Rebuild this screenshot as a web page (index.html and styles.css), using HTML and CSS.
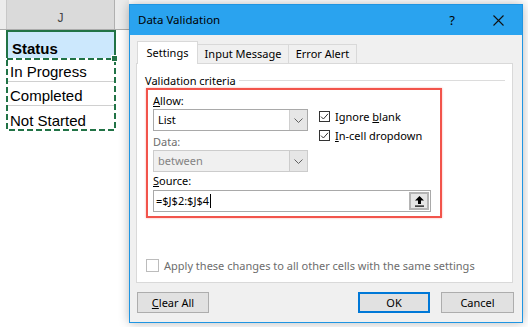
FILE: index.html
```html
<!DOCTYPE html>
<html>
<head>
<meta charset="utf-8">
<link rel="stylesheet" href="styles.css">
</head>
<body>
<div class="screen">
  <div class="sheet">
    <div class="hdr">
      <div class="hdr-gap"></div>
      <div class="hdr-j">J</div>
      <div class="hdr-rest"></div>
    </div>
    <div class="cells">
      <div class="cell head">Status</div>
      <div class="range">
        <div class="cell row">In Progress</div>
        <div class="cell row">Completed</div>
        <div class="cell row last">Not Started</div>
        <svg class="ants" width="110" height="73" viewBox="0 0 110 73"><rect x="1" y="1" width="108" height="71" fill="none" stroke="#217346" stroke-width="2" stroke-dasharray="6 3"/></svg>
        <div class="handle"></div>
      </div>
    </div>
  </div>

  <div class="dialog">
    <div class="titlebar">
      <span class="title">Data Validation</span>
      <span class="help">?</span>
      <span class="close"><svg width="11" height="11" viewBox="0 0 11 11"><path d="M0.5 0.5 L10.5 10.5 M10.5 0.5 L0.5 10.5" stroke="#111" stroke-width="1.1" fill="none"/></svg></span>
    </div>
    <div class="dbody">
      <div class="tabs">
        <div class="tab active">Settings</div>
        <div class="tab t2">Input Message</div>
        <div class="tab t3">Error Alert</div>
      </div>
      <div class="panel">
        <div class="group">
          <span class="glabel">Validation criteria</span>
          <span class="gline"></span>
        </div>
        <div class="criteria">
          <div class="top">
            <div class="lcol">
              <div class="lbl"><u>A</u>llow:</div>
              <div class="select">
                <span class="val">List</span>
                <span class="dd"><svg width="9" height="5" viewBox="0 0 9 5"><polyline points="0.5,0.5 4.5,4.5 8.5,0.5" fill="none" stroke="#606060"/></svg></span>
              </div>
              <div class="lbl dis">Data:</div>
              <div class="select disabled">
                <span class="val">between</span>
                <span class="dd"><svg width="9" height="5" viewBox="0 0 9 5"><polyline points="0.5,0.5 4.5,4.5 8.5,0.5" fill="none" stroke="#606060"/></svg></span>
              </div>
            </div>
            <div class="rcol">
              <div class="chk"><svg width="11" height="11" viewBox="0 0 11 11"><rect x="0.5" y="0.5" width="10" height="10" fill="#fff" stroke="#333"/><polyline points="2,5.6 4.4,8 9,2.8" fill="none" stroke="#333"/></svg><span>Ignore <u>b</u>lank</span></div>
              <div class="chk"><svg width="11" height="11" viewBox="0 0 11 11"><rect x="0.5" y="0.5" width="10" height="10" fill="#fff" stroke="#333"/><polyline points="2,5.6 4.4,8 9,2.8" fill="none" stroke="#333"/></svg><span><u>I</u>n-cell dropdown</span></div>
            </div>
          </div>
          <div class="lbl src"><u>S</u>ource:</div>
          <div class="input">
            <span class="val">=$J$2:$J$4<span class="caret"></span></span>
            <span class="upbtn"><svg width="11" height="12" viewBox="0 0 11 12"><path d="M5.5 1 L10 5.5 H7 V9 H4 V5.5 H1 Z" fill="#000"/><rect x="1" y="10.5" width="9" height="1.2" fill="#000"/></svg></span>
          </div>
        </div>
        <div class="apply">
          <span class="box"></span>
          <span>Apply these changes to all other cells with the same settings</span>
        </div>
      </div>
      <div class="buttons">
        <div class="btn"><u>C</u>lear All</div>
        <div class="spacer"></div>
        <div class="btn ok">OK</div>
        <div class="btn">Cancel</div>
      </div>
    </div>
  </div>
</div>
</body>
</html>
```

FILE: styles.css
```css
html, body {
  margin: 0;
  padding: 0;
  background: #ffffff;
}
.screen {
  position: relative;
  width: 528px;
  height: 327px;
  overflow: hidden;
  background: #ffffff;
}

/* ---------- spreadsheet ---------- */
.sheet {
  width: 129px;
  font-family: "Liberation Sans", Arial, sans-serif;
}
.hdr {
  display: flex;
  height: 29px;
  border-bottom: 1px solid #ababab;
  background: #e6e6e6;
}
.hdr-gap {
  width: 6px;
  background: #ececec;
}
.hdr-j {
  width: 109px;
  border-left: 1px solid #c8c8c8;
  border-right: 1px solid #b0b0b0;
  background: #dadada;
  display: flex;
  align-items: center;
  justify-content: center;
  font-size: 12px;
  color: #444;
  padding-top: 6px;
  box-sizing: border-box;
}
.hdr-rest {
  flex: 1;
  background: #ebebeb;
}
.cells {
  margin-left: 6px;
  width: 110px;
}
.cell {
  box-sizing: border-box;
  font-size: 15px;
  color: #000;
  display: flex;
  align-items: flex-end;
  padding-left: 4px;
}
.cell.head {
  height: 28px;
  background: #cce8fd;
  border: 2px solid #217346;
  border-bottom: none;
  font-weight: bold;
  padding-left: 4px;
  padding-bottom: 1px;
}
.range {
  position: relative;
  height: 73px;
  padding: 0 2px;
  box-sizing: border-box;
}
.cell.row {
  height: 24px;
  border-bottom: 1px solid #d0d0d0;
  padding-bottom: 1px;
  padding-left: 2px;
}
.cell.row.last {
  border-bottom: none;
}
.ants {
  position: absolute;
  left: 0;
  top: 0;
}
.handle {
  position: absolute;
  right: -2px;
  top: -3px;
  width: 5px;
  height: 5px;
  background: #217346;
  border: 1px solid #fff;
}

/* ---------- dialog ---------- */
.dialog {
  position: absolute;
  left: 129px;
  top: 4px;
  width: 394px;
  height: 319px;
  box-sizing: border-box;
  border: 1px solid #1f95e2;
  background: #f0f0f0;
  box-shadow: 0 0 10px rgba(0, 0, 0, 0.28);
  display: flex;
  flex-direction: column;
  font-family: "Noto Sans", "Open Sans", sans-serif;
  font-size: 11px;
  color: #000;
}
.titlebar {
  height: 30px;
  background: #2aa3ef;
  display: flex;
  align-items: center;
  padding-left: 8px;
  box-sizing: border-box;
}
.title {
  flex: 1;
  font-size: 11.5px;
  padding-bottom: 1px;
}
.help {
  width: 10px;
  font-size: 13px;
  margin-right: 36px;
  text-align: center;
}
.close {
  width: 11px;
  height: 11px;
  display: flex;
  margin-right: 18px;
}
.dbody {
  flex: 1;
  display: flex;
  flex-direction: column;
}
.tabs {
  height: 28px;
  display: flex;
  align-items: flex-end;
  padding-left: 7px;
  box-sizing: border-box;
}
.tab {
  box-sizing: border-box;
  height: 19px;
  border: 1px solid #d9d9d9;
  border-bottom: none;
  background: #f0f0f0;
  display: flex;
  align-items: center;
  justify-content: center;
  padding-bottom: 1px;
  margin-left: -1px;
}
.tab.active {
  width: 61px;
  background: #ffffff;
  margin-left: 0;
  position: relative;
  z-index: 1;
  margin-bottom: -1px;
  height: 23px;
  padding-bottom: 2px;
}
.tab.t2 {
  width: 92px;
}
.tab.t3 {
  width: 69px;
}
.panel {
  margin-left: 6px;
  width: 377px;
  height: 220px;
  box-sizing: border-box;
  border: 1px solid #d9d9d9;
  background: #ffffff;
  display: flex;
  flex-direction: column;
  padding: 0 7px 0 9px;
}
.group {
  display: flex;
  align-items: center;
  height: 16px;
  margin-top: 8px;
}
.glabel {
  color: #000;
  margin-right: 3px;
  margin-left: -1px;
}
.gline {
  flex: 1;
  border-top: 1px solid #dcdcdc;
  margin-top: 1px;
}
.criteria {
  width: 296px;
  height: 130px;
  box-sizing: border-box;
  border: 2px solid #f2544b;
  box-shadow: 0 0 2px rgba(242, 84, 75, 0.45);
  padding: 3px 0 0 5px;
}
.top {
  display: flex;
}
.lcol {
  width: 155px;
  display: flex;
  flex-direction: column;
}
.lbl {
  height: 16px;
  line-height: 16px;
}
.lbl.dis {
  color: #6d6d6d;
  margin-top: 3px;
}
.lbl.src {
  margin-top: 1px;
}
.select {
  height: 22px;
  box-sizing: border-box;
  border: 1px solid #a9a9a9;
  background: #fff;
  display: flex;
  align-items: stretch;
}
.select .val {
  flex: 1;
  display: flex;
  align-items: center;
  padding-left: 4px;
  padding-bottom: 1px;
}
.select .dd {
  width: 17px;
  background: #e6e6e6;
  border-left: 1px solid #cfcfcf;
  display: flex;
  align-items: center;
  justify-content: center;
}
.select.disabled {
  background: #f0f0f0;
  border-color: #cccccc;
  color: #838383;
}
.select.disabled .dd {
  background: #e6e6e6;
  border-left-color: #cccccc;
}
.rcol {
  display: flex;
  flex-direction: column;
  padding-top: 14px;
  margin-left: 11px;
}
.chk {
  display: flex;
  align-items: center;
  height: 19px;
}
.chk svg {
  margin-right: 5px;
  flex: none;
}
.input {
  width: 278px;
  height: 22px;
  box-sizing: border-box;
  border: 1px solid #a9a9a9;
  background: #fff;
  display: flex;
  margin-top: 1px;
}
.input .val {
  flex: 1;
  display: flex;
  align-items: center;
  padding-left: 2px;
  padding-bottom: 1px;
}
.caret {
  display: inline-block;
  width: 1px;
  height: 14px;
  background: #000;
  margin-left: 1px;
}
.upbtn {
  width: 20px;
  margin: 1px;
  box-sizing: border-box;
  border: 2px solid #b4b4b4;
  background: #e6e6e6;
  display: flex;
  align-items: center;
  justify-content: center;
}
.apply {
  margin-top: auto;
  margin-bottom: 10px;
  display: flex;
  align-items: center;
  color: #6d6d6d;
  height: 14px;
}
.apply .box {
  width: 13px;
  height: 13px;
  box-sizing: border-box;
  border: 1px solid #bcbcbc;
  background: #fff;
  margin-right: 5px;
  flex: none;
}
.buttons {
  display: flex;
  padding: 9px 8px 0 7px;
}
.spacer {
  flex: 1;
}
.btn {
  width: 72px;
  height: 21px;
  box-sizing: border-box;
  border: 1px solid #adadad;
  background: #e1e1e1;
  display: flex;
  align-items: center;
  justify-content: center;
  padding-bottom: 1px;
}
.btn.ok {
  border: 2px solid #0078d7;
  margin-right: 11px;
}
.btn:last-child {
  width: 73px;
}
```
